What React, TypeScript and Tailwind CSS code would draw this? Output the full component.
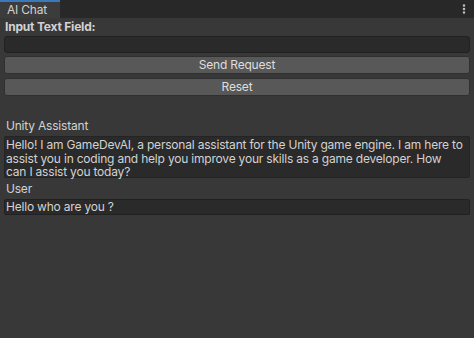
import { EllipsisVertical } from "lucide-react";

const font = { fontFamily: "Inter, 'Noto Sans', sans-serif" };

export default function App() {
  return (
    <div
      className="w-[474px] h-[338px] bg-[#383838] text-[#d2d2d2] text-[12px] tracking-[-0.2px] overflow-hidden flex flex-col"
      style={font}
    >
      {/* Tab strip */}
      <div className="h-[18px] bg-[#282828] flex items-stretch">
        <div className="w-[60px] bg-[#3c3c3c] border-t-2 border-[#3a79bb] flex items-center pl-[7px] text-[12px] leading-none">
          AI Chat
        </div>
        <div className="flex-1" />
        <div className="w-[20px] flex items-center justify-center text-[#c4c4c4]">
          <EllipsisVertical size={12} strokeWidth={3} />
        </div>
      </div>

      <div className="px-[4px] flex flex-col">
        <div className="font-bold pl-[1px] h-[18px] leading-[18px]">Input Text Field:</div>
        <div className="h-[17px] bg-[#2a2a2a] border border-[#212121] rounded-[3px]" />

        <button className="h-[18px] bg-[#585858] border border-[#303030] rounded-[3px] mt-[3px] text-[12px] leading-[16px] text-[#dedede]">
          Send Request
        </button>
        <button className="h-[18px] bg-[#585858] border border-[#303030] rounded-[3px] mt-[4px] text-[12px] leading-[16px] text-[#dedede]">
          Reset
        </button>

        <div className="mt-[21px] pl-[2px] h-[17px] leading-[17px]">Unity Assistant</div>
        <div className="mt-[2px] bg-[#2a2a2a] border border-[#242424] rounded-[2px] pl-[1px] pr-[5px] py-[1px] leading-[13.5px] h-[42px]">
          Hello! I am GameDevAI, a personal assistant for the Unity game engine. I am here to assist you in coding and help you improve your skills as a game developer. How can I assist you today?
        </div>
        <div className="mt-[2px] pl-[2px] h-[17px] leading-[17px]">User</div>
        <div className="mt-[2px] h-[16px] bg-[#2a2a2a] border border-[#212121] rounded-[2px] px-[1px] leading-[14px]">
          Hello who are you ?
        </div>
      </div>
    </div>
  );
}
